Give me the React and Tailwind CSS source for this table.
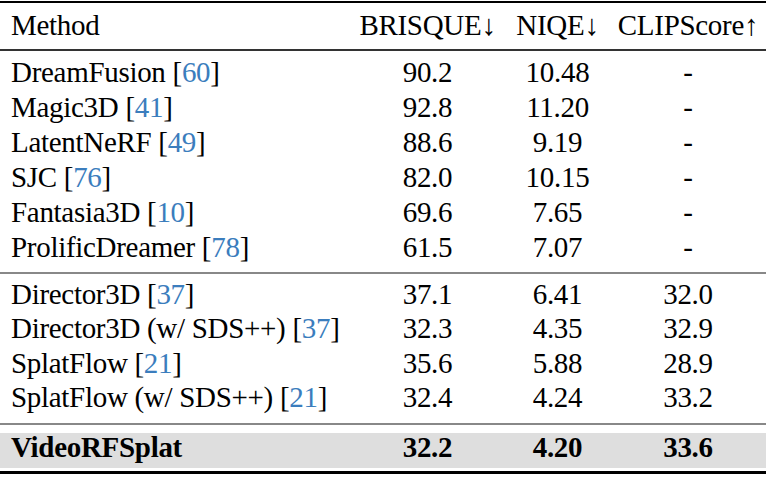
const BASELINES = [
  { name: "DreamFusion", ref: "60", brisque: "90.2", niqe: "10.48", clip: "-" },
  { name: "Magic3D", ref: "41", brisque: "92.8", niqe: "11.20", clip: "-" },
  { name: "LatentNeRF", ref: "49", brisque: "88.6", niqe: "9.19", clip: "-" },
  { name: "SJC", ref: "76", brisque: "82.0", niqe: "10.15", clip: "-" },
  { name: "Fantasia3D", ref: "10", brisque: "69.6", niqe: "7.65", clip: "-" },
  { name: "ProlificDreamer", ref: "78", brisque: "61.5", niqe: "7.07", clip: "-" },
];

const SCENE_METHODS = [
  { name: "Director3D", ref: "37", brisque: "37.1", niqe: "6.41", clip: "32.0" },
  { name: "Director3D (w/ SDS++)", ref: "37", brisque: "32.3", niqe: "4.35", clip: "32.9" },
  { name: "SplatFlow", ref: "21", brisque: "35.6", niqe: "5.88", clip: "28.9" },
  { name: "SplatFlow (w/ SDS++)", ref: "21", brisque: "32.4", niqe: "4.24", clip: "33.2" },
];

const COLS = "grid grid-cols-[350px_155px_105px_156px]";

function Row({ row, height }) {
  return (
    <div className={`${COLS} whitespace-nowrap ${height}`}>
      <div className="pl-[11px]">
        {row.name} [<span className="text-[#3b7dbd]">{row.ref}</span>]
      </div>
      <div className="text-center">{row.brisque}</div>
      <div className="text-center">{row.niqe}</div>
      <div className="text-center">{row.clip}</div>
    </div>
  );
}

export default function App() {
  return (
    <div className="w-[770px] h-[477px] bg-white text-black text-[29px] tracking-[-0.3px] [font-family:'Liberation_Serif','Times_New_Roman',serif]">
      <div className="w-[766px]">
        <div className="h-[1px]" />
        <div className="h-[2px] bg-black" />

        <div className={`${COLS} h-[46px] leading-[45px] whitespace-nowrap`}>
          <div className="pl-[11px]">Method</div>
          <div className="text-center">BRISQUE↓</div>
          <div className="text-center">NIQE↓</div>
          <div className="text-center">CLIPScore↑</div>
        </div>
        <div className="h-[2px] bg-[#333]" />

        <div className="pt-[4px] pb-[7px]">
          {BASELINES.map((r) => (
            <Row key={r.name} row={r} height="h-[35px] leading-[34px]" />
          ))}
        </div>
        <div className="h-[2px] bg-[#888]" />

        <div className="pt-[4px] pb-[8px]">
          {SCENE_METHODS.map((r) => (
            <Row key={r.name} row={r} height="h-[34.3px] leading-[33.6px]" />
          ))}
        </div>
        <div className="h-[2px] bg-[#888]" />

        <div className={`${COLS} mt-[8px] h-[35px] leading-[29px] bg-[#dedede] font-bold whitespace-nowrap`}>
          <div className="pl-[11px]">VideoRFSplat</div>
          <div className="text-center">32.2</div>
          <div className="text-center">4.20</div>
          <div className="text-center">33.6</div>
        </div>
        <div className="mt-[3px] h-[3px] bg-black" />
      </div>
    </div>
  );
}
